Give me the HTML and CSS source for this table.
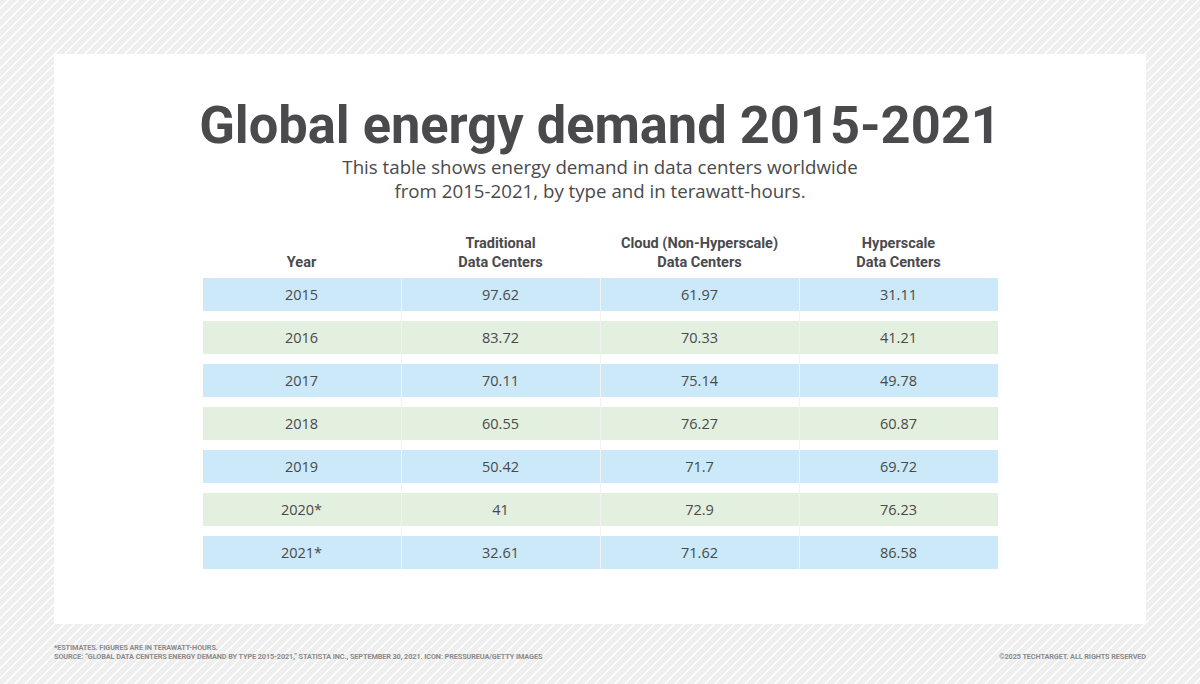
FILE: index.html
```html
<!DOCTYPE html>
<html lang="en">
<head>
<meta charset="utf-8">
<title>Global energy demand 2015-2021</title>
<link rel="stylesheet" href="styles.css">
</head>
<body>
<div class="page">
  <main class="card">
    <h1 class="title">Global energy demand 2015-2021</h1>
    <p class="subtitle">This table shows energy demand in data centers worldwide<br>from 2015-2021, by type and in terawatt-hours.</p>
    <div class="table">
      <div class="thead">
        <div class="th">Year</div>
        <div class="th">Traditional<br>Data Centers</div>
        <div class="th">Cloud (Non-Hyperscale)<br>Data Centers</div>
        <div class="th">Hyperscale<br>Data Centers</div>
      </div>
      <div class="tbody">
        <div class="row blue"><div class="td">2015</div><div class="td">97.62</div><div class="td">61.97</div><div class="td">31.11</div></div>
        <div class="row green"><div class="td">2016</div><div class="td">83.72</div><div class="td">70.33</div><div class="td">41.21</div></div>
        <div class="row blue"><div class="td">2017</div><div class="td">70.11</div><div class="td">75.14</div><div class="td">49.78</div></div>
        <div class="row green"><div class="td">2018</div><div class="td">60.55</div><div class="td">76.27</div><div class="td">60.87</div></div>
        <div class="row blue"><div class="td">2019</div><div class="td">50.42</div><div class="td">71.7</div><div class="td">69.72</div></div>
        <div class="row green"><div class="td">2020*</div><div class="td">41</div><div class="td">72.9</div><div class="td">76.23</div></div>
        <div class="row blue"><div class="td">2021*</div><div class="td">32.61</div><div class="td">71.62</div><div class="td">86.58</div></div>
      </div>
    </div>
  </main>
  <footer class="footer">
    <div class="notes">
      <p>*Estimates. Figures are in terawatt-hours.</p>
      <p>Source: “Global data centers energy demand by type 2015-2021,” Statista Inc., September 30, 2021. Icon: pressureua/Getty Images</p>
    </div>
    <p class="copy">©2025 TechTarget. All rights reserved</p>
  </footer>
</div>
</body>
</html>
```

FILE: styles.css
```css
* { box-sizing: border-box; }

html, body {
  margin: 0;
  padding: 0;
}

body {
  width: 1200px;
  height: 684px;
  overflow: hidden;
  background-color: #efefef;
  background-image: repeating-linear-gradient(135deg, #efefef 0 5.4px, #ffffff 5.4px 7.07px);
  font-family: "Open Sans", "Liberation Sans", sans-serif;
  color: #4a4a4c;
}

.page {
  padding: 54px 54px 0;
}

.card {
  height: 570px;
  background: #ffffff;
  display: flex;
  flex-direction: column;
  align-items: center;
  padding-top: 41px;
}

.title {
  margin: 0;
  font-family: Roboto, "Liberation Sans", sans-serif;
  font-weight: 700;
  font-size: 52.4px;
  line-height: 60px;
  letter-spacing: 0;
  color: #4a4a4c;
}

.subtitle {
  margin: 0;
  text-align: center;
  font-size: 18.7px;
  line-height: 24px;
  color: #4a4a4c;
}

.table {
  width: 795px;
  margin-top: 31px;
}

.thead,
.row {
  display: grid;
  grid-template-columns: repeat(4, 198px);
  column-gap: 1px;
}

.th {
  display: flex;
  align-items: flex-end;
  justify-content: center;
  text-align: center;
  font-family: Roboto, "Liberation Sans", sans-serif;
  font-weight: 700;
  font-size: 14.5px;
  line-height: 19px;
  color: #4a4a4c;
  padding-bottom: 4px;
}

.tbody {
  margin-top: 2px;
  display: flex;
  flex-direction: column;
  gap: 10px;
  background-image: linear-gradient(to right, #f2f2f2 0 1px, transparent 1px);
  background-size: 199px 100%;
  background-position: -1px 0;
}

.row {
  height: 33px;
}

.td {
  display: flex;
  align-items: center;
  justify-content: center;
  font-size: 14.5px;
  color: #4a4a4c;
}

.blue .td { background: #cce9f9; }
.green .td { background: #e3efdf; }

.footer {
  display: flex;
  justify-content: space-between;
  align-items: flex-end;
  padding-top: 19px;
  font-family: Roboto, "Liberation Sans", sans-serif;
  font-size: 7.3px;
  font-weight: 700;
  text-transform: uppercase;
  color: #8c8c8c;
  letter-spacing: -0.1px;
}

.notes p,
.copy {
  margin: 0;
  line-height: 9px;
}
```
